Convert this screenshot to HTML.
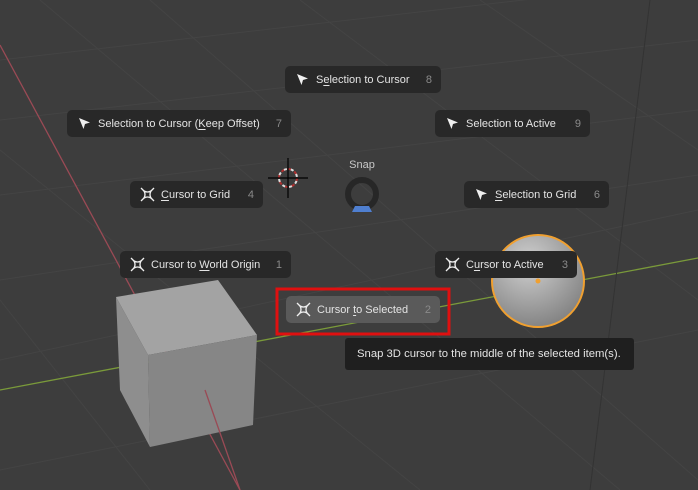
<!DOCTYPE html>
<html><head><meta charset="utf-8"><style>
html,body{margin:0;padding:0;}
body{width:698px;height:490px;background:#3d3d3d;position:relative;overflow:hidden;font-family:"Liberation Sans","DejaVu Sans",sans-serif;}
svg.bg{position:absolute;left:0;top:0;}
.b{position:absolute;height:27px;background:#282828;border-radius:5px;color:#e4e4e4;font-size:11px;line-height:27px;box-sizing:border-box;}
.b .ic{position:absolute;left:10px;top:6px;width:15px;height:15px;}
.b .t{position:absolute;left:31px;top:1px;white-space:nowrap;}
.b .n{position:absolute;right:9px;top:1px;color:#8a8a8a;}
.hl{background:#5a5a5a;}
u{text-decoration:underline;text-underline-offset:2px;}
</style></head><body>
<svg class="bg" width="698" height="490" viewBox="0 0 698 490">
<g stroke="#444" stroke-width="1" fill="none">
<line x1="0" y1="60" x2="698" y2="-20"/>
<line x1="0" y1="120" x2="698" y2="40"/>
<line x1="0" y1="195" x2="698" y2="110"/>
<line x1="0" y1="280" x2="698" y2="175"/>
<line x1="0" y1="470" x2="698" y2="330"/>
<line x1="0" y1="360" x2="698" y2="210"/>
<line x1="150" y1="0" x2="698" y2="480"/>
<line x1="300" y1="0" x2="698" y2="300"/>
<line x1="0" y1="150" x2="420" y2="490"/>
<line x1="40" y1="0" x2="620" y2="490"/>
<line x1="480" y1="0" x2="698" y2="150"/>
<line x1="0" y1="300" x2="150" y2="490"/>
</g>
<line x1="0" y1="390" x2="698" y2="258" stroke="#7a9a3a" stroke-width="1.3"/>
<line x1="0" y1="45" x2="240" y2="490" stroke="#9a4a55" stroke-width="1.3"/>
<line x1="650" y1="0" x2="590" y2="490" stroke="#333" stroke-width="1"/>
<polygon points="116,297 218,280 257,335 148,355" fill="#a3a3a3"/>
<polygon points="116,297 148,355 150,447 120,390" fill="#8e8e8e"/>
<polygon points="148,355 257,335 253,425 150,447" fill="#868686"/>
<line x1="205" y1="390" x2="240" y2="490" stroke="#9a4a55" stroke-width="1.3"/>
<defs><radialGradient id="sg" cx="0.4" cy="0.3" r="0.8"><stop offset="0" stop-color="#d0d0d0"/><stop offset="1" stop-color="#7a7a7a"/></radialGradient></defs>
<circle cx="538" cy="281" r="46" fill="url(#sg)" stroke="#f0a030" stroke-width="2"/>
<circle cx="538" cy="281" r="2.5" fill="#f0a030"/>
<circle cx="288" cy="178" r="9" fill="none" stroke="#b03030" stroke-width="2" stroke-dasharray="4 3"/>
<circle cx="288" cy="178" r="9" fill="none" stroke="#ddd" stroke-width="2" stroke-dasharray="3 4" stroke-dashoffset="4"/>
<g stroke="#000" stroke-width="1.2"><line x1="288" y1="158" x2="288" y2="198"/><line x1="268" y1="178" x2="308" y2="178"/></g>
<text x="362" y="168" fill="#c8c8c8" font-size="11" text-anchor="middle" font-family="Liberation Sans,sans-serif">Snap</text>
<circle cx="362" cy="194" r="14" fill="none" stroke="#272727" stroke-width="6"/>
<path d="M355 206 L369 206 L372 212 L352 212Z" fill="#4f7fd0"/>
<rect x="277" y="289" width="172" height="45" fill="none" stroke="#e01010" stroke-width="3"/>
</svg>
<svg width="0" height="0" style="position:absolute"><defs>
<symbol id="ar" viewBox="0 0 15 15"><path d="M2 2 L13 6.5 L8 8 L6.5 13 Z" fill="#f0f0f0"/></symbol>
<symbol id="cu" viewBox="0 0 15 15"><g stroke="#f0f0f0" stroke-width="1.3" fill="none"><path d="M4 4 Q7.5 6 11 4 Q9 7.5 11 11 Q7.5 9 4 11 Q6 7.5 4 4Z"/><line x1="1" y1="1" x2="4" y2="4"/><line x1="14" y1="1" x2="11" y2="4"/><line x1="1" y1="14" x2="4" y2="11"/><line x1="14" y1="14" x2="11" y2="11"/></g></symbol>
</defs></svg>
<div class="b" style="left:285px;top:66px;width:156px"><svg class="ic"><use href="#ar"/></svg><span class="t">S<u>e</u>lection to Cursor</span><span class="n">8</span></div>
<div class="b" style="left:67px;top:110px;width:224px"><svg class="ic"><use href="#ar"/></svg><span class="t">Selection to Cursor (<u>K</u>eep Offset)</span><span class="n">7</span></div>
<div class="b" style="left:435px;top:110px;width:155px"><svg class="ic"><use href="#ar"/></svg><span class="t">Selection to Active</span><span class="n">9</span></div>
<div class="b" style="left:130px;top:181px;width:133px"><svg class="ic"><use href="#cu"/></svg><span class="t"><u>C</u>ursor to Grid</span><span class="n">4</span></div>
<div class="b" style="left:464px;top:181px;width:145px"><svg class="ic"><use href="#ar"/></svg><span class="t"><u>S</u>election to Grid</span><span class="n">6</span></div>
<div class="b" style="left:120px;top:251px;width:171px"><svg class="ic"><use href="#cu"/></svg><span class="t">Cursor to <u>W</u>orld Origin</span><span class="n">1</span></div>
<div class="b" style="left:435px;top:251px;width:142px"><svg class="ic"><use href="#cu"/></svg><span class="t">C<u>u</u>rsor to Active</span><span class="n">3</span></div>
<div class="b hl" style="left:286px;top:296px;width:154px"><svg class="ic"><use href="#cu"/></svg><span class="t">Cursor <u>t</u>o Selected</span><span class="n">2</span></div>
<div class="b" style="left:345px;top:338px;width:289px;height:32px;line-height:31px;background:#1f1f1f;border-radius:3px;font-size:11.3px"><span style="position:absolute;left:12px;top:1px;white-space:nowrap">Snap 3D cursor to the middle of the selected item(s).</span></div>
</body></html>
